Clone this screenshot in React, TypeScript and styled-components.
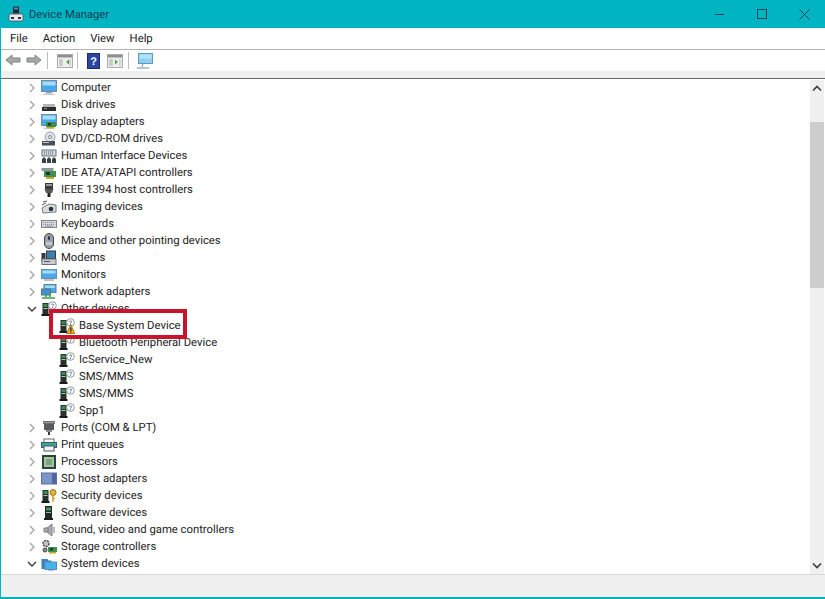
import React from "react";
import styled, { createGlobalStyle } from "styled-components";

const Global = createGlobalStyle`
  html, body { margin: 0; padding: 0; width: 825px; height: 599px; overflow: hidden; background: #00b4c1; }
  #root { width: 825px; height: 599px; }
  * { box-sizing: border-box; }
`;

const Window = styled.div`
  width: 825px; height: 599px; display: flex; flex-direction: column; overflow: hidden;
  background: #00b4c1; padding: 0 0 2px 1px;
  font-family: "Roboto", "Noto Sans", sans-serif; font-size: 11.3px; color: #1c1c1c;
  text-rendering: geometricPrecision;
`;
const TitleBar = styled.header`
  height: 28px; flex: none; display: flex; align-items: center; padding-left: 8px; gap: 5px; margin-left: -1px;
`;
const TitleText = styled.span`flex: 1; color: #0f3f55; font-size: 11.2px;`;
const WinControls = styled.div`display: flex; flex: none; margin-right: -1px;`;
const WinButton = styled.div`
  width: 42.5px; height: 28px; display: flex; align-items: center; justify-content: center; color: #0d4058;
`;
const Menu = styled.nav`
  height: 22px; flex: none; display: flex; align-items: center; background: #fff; padding-left: 1px; border-bottom: 1px solid #b4b4b4;
`;
const MenuItem = styled.span`padding: 0 7.5px; line-height: 21px; &:first-child { padding-left: 8px; }`;
const Toolbar = styled.div`
  height: 21px; flex: none; display: flex; align-items: center; background: #fff; padding-left: 4px;
`;
const ToolIcon = styled.span<{ $w: number; $after?: number }>`
  width: ${p => p.$w}px; height: 16px; margin-right: ${p => p.$after ?? 0}px; display: block; flex: none;
  svg { display: block; }
`;
const ToolSep = styled.span<{ $after: number }>`
  width: 1px; height: 17px; background: #bcbcbc; margin-right: ${p => p.$after}px; flex: none;
`;
const Band = styled.div`height: 8px; flex: none; background: #f0f0f0; border-bottom: 1px solid #6a6a6a;`;
const Main = styled.div`flex: 1; min-height: 0; display: flex; background: #fff;`;
const Tree = styled.ul`
  flex: 1; margin: 0; padding: 0; list-style: none; overflow: hidden; min-width: 0;
`;
const Row = styled.li<{ $child?: boolean }>`
  position: relative; height: 17px; display: flex; align-items: center;
  padding-left: ${p => (p.$child ? 58 : 21)}px;
  svg { flex: none; }
`;
const Chevron = styled.span`width: 19px; height: 17px; display: flex; align-items: center; justify-content: center; flex: none;`;
const Label = styled.span`margin-left: 4px; white-space: nowrap; line-height: 17px; margin-top: -1px;`;
const Highlight = styled.div`
  position: absolute; left: 48px; top: -8px; width: 138px; height: 30px; border: 4px solid #c9142e; z-index: 2; pointer-events: none;
`;
const Scrollbar = styled.div`
  width: 15px; flex: none; background: #f0f0f0; display: flex; flex-direction: column; margin-top: 1px;
  border-right: 1px solid #fff;
`;
const Arrow = styled.div`height: 17px; flex: none; display: flex; align-items: center; justify-content: center;`;
const TrackGap = styled.div<{ $h?: number }>`${p => (p.$h ? `height: ${p.$h}px; flex: none;` : "flex: 1;")}`;
const Thumb = styled.div`height: 166px; flex: none; background: #cdcdcd;`;
const StatusBar = styled.footer`height: 23px; flex: none; background: #f0f0f0; border-top: 1px solid #d7d7d7;`;

const S = ({ children }: { children: React.ReactNode }) => (
  <svg width="16" height="16" viewBox="0 0 16 16">{children}</svg>
);

const Tower = ({ x = 0 }: { x?: number }) => (
  <g transform={`translate(${x} 0)`}>
    <rect x="1.5" y="2" width="6" height="11" fill="#26322b" />
    <rect x="2.5" y="3" width="4" height="3" fill="#3a8a58" />
    <rect x="2.5" y="7" width="4" height="1" fill="#a8c8b0" />
    <rect x="0.5" y="13" width="8" height="2" fill="#1a1a1a" />
  </g>
);
const QBubble = () => (
  <g>
    <circle cx="11.5" cy="4.5" r="3.8" fill="#fff" stroke="#8c9aa6" />
    <path d="M10.3 3.6c.3-1 2.4-1 2.4.2 0 .8-1.2.9-1.2 1.8" fill="none" stroke="#55636e" strokeWidth=".9" />
    <rect x="11.1" y="6.2" width=".9" height=".9" fill="#55636e" />
  </g>
);
const Mon = ({ c = "#4aa8e8" }: { c?: string }) => (
  <g>
    <rect x="0.5" y="0.5" width="15" height="11" fill={c} stroke="#6f8da6" />
    <rect x="1.5" y="1.5" width="13" height="4" fill="#a6dcfa" />
    <rect x="5" y="12" width="6" height="1.5" fill="#9aa6ae" />
    <rect x="2.5" y="13.5" width="11" height="1.5" fill="#c3ccd3" />
  </g>
);
const Card = () => (
  <g>
    <rect x="5" y="8" width="10" height="5" fill="#3d8f4a" />
    <rect x="6" y="13" width="7" height="1.5" fill="#c9a82e" />
    <rect x="7" y="9" width="3" height="2.5" fill="#1d3d26" />
  </g>
);

const icons: Record<string, React.ReactNode> = {
  computer: <S><Mon /></S>,
  disk: <S><rect x="2" y="7" width="12" height="3" fill="#b6b6b6" /><rect x="1" y="10" width="14" height="4" fill="#2d2d2d" /><rect x="3" y="11" width="3" height="1" fill="#8a8a8a" /></S>,
  display: <S><Mon /><Card /></S>,
  dvd: <S><circle cx="9" cy="6" r="5" fill="#dde2e6" stroke="#9aa3aa" /><circle cx="9" cy="6" r="1.5" fill="#fff" stroke="#7c868e" /><rect x="1" y="10" width="13" height="4.5" fill="#4a4f54" /><rect x="2" y="11" width="6" height="1" fill="#c5c9cc" /></S>,
  hid: <S><rect x="1" y="2" width="14" height="6" fill="#cfd6dc" stroke="#6d7780" /><path d="M3 4h10M3 6h10" stroke="#596570" strokeDasharray="1 1" /><path d="M1 15v-4l2-2 2 2v4zM6 15v-4l2-2 2 2v4zM11 15v-4l2-2 2 2v4z" fill="#3a4048" /></S>,
  ide: <S><rect x="0.5" y="3" width="12" height="3" fill="#8f9499" /><rect x="3" y="6" width="12" height="6" fill="#3c9150" /><rect x="5" y="7" width="4" height="3" fill="#183a22" /><rect x="5" y="12" width="8" height="2" fill="#c9a82e" /></S>,
  ieee: <S><rect x="4" y="1" width="8" height="6" fill="#3a3a3a" /><rect x="5" y="2" width="6" height="2" fill="#9a9a9a" /><path d="M3.5 7h9L11 11H5z" fill="#565656" /><rect x="6.5" y="11" width="3" height="4" fill="#222" /></S>,
  imaging: <S><path d="M1 9l7-4 7 1v7l-13 1z" fill="#d8dde0" stroke="#757d84" /><circle cx="10" cy="10" r="2.3" fill="#2a3238" /><path d="M2 3l4-1M1 6l4-2" stroke="#555" /></S>,
  keyboard: <S><rect x="0.5" y="4.5" width="15" height="7" fill="#d3d7da" stroke="#7e858b" /><path d="M2 6.5h12M2 8.5h12" stroke="#8d9499" strokeDasharray="1 1" /><rect x="4" y="9.6" width="8" height="1" fill="#8d9499" /></S>,
  mouse: <S><rect x="3.5" y="0.5" width="9" height="15" rx="4.5" fill="#9aa1a8" stroke="#404850" /><rect x="7" y="3" width="2" height="4" rx="1" fill="#333b44" /><path d="M5 9h6v3H5z" fill="#c3c8cc" /></S>,
  modem: <S><rect x="5" y="0.5" width="10" height="8.5" fill="#2e3a44" /><rect x="6" y="1.5" width="8" height="6.5" fill="#3e7fa8" /><rect x="0.5" y="3" width="4" height="9" fill="#33383d" /><rect x="1" y="9" width="14" height="5.5" fill="#c8ccd0" stroke="#6c7278" /><rect x="3" y="11" width="6" height="1" fill="#555" /></S>,
  monitor: <S><rect x="0.5" y="2.5" width="15" height="9" fill="#4aa8e8" stroke="#6f8da6" /><rect x="1.5" y="3.5" width="13" height="3" fill="#a6dcfa" /><rect x="3" y="12" width="10" height="2" fill="#b9c2c9" /></S>,
  network: <S><rect x="3" y="0.5" width="12" height="8" fill="#4aa8e8" stroke="#5f7f99" /><rect x="4" y="1.5" width="10" height="2.5" fill="#a6dcfa" /><rect x="0.5" y="5" width="9" height="6" fill="#3c94d6" stroke="#56748c" /><path d="M5 11v2M1 14h13M9 9v4" stroke="#3aa04a" strokeWidth="1.6" /></S>,
  other: <S><Tower /><QBubble /></S>,
  warn: <S><Tower /><QBubble /><path d="M7.5 15.5L11.8 6.5l4 9z" fill="#f2b61c" stroke="#8f640a" strokeWidth=".8" /><rect x="11.2" y="9.5" width="1.3" height="3.4" fill="#222" /><rect x="11.2" y="13.4" width="1.3" height="1.2" fill="#222" /></S>,
  ports: <S><rect x="2" y="1" width="12" height="3" fill="#6c6f72" /><path d="M2.5 2.5h11" stroke="#c6c8ca" strokeDasharray="1 1" /><rect x="3" y="4" width="10" height="6" fill="#585b5e" /><rect x="5" y="10" width="6" height="2" fill="#8a8d90" /><rect x="7" y="12" width="2" height="3" fill="#3a3a3a" /></S>,
  print: <S><rect x="3" y="2" width="10" height="4" fill="#fff" stroke="#626a70" /><rect x="0.5" y="5.5" width="15" height="5" fill="#36a5a8" stroke="#44585c" /><rect x="3" y="9" width="10" height="5" fill="#f4f4f4" stroke="#50585c" /></S>,
  proc: <S><rect x="1" y="1" width="14" height="14" fill="#28463a" /><rect x="3" y="3" width="10" height="10" fill="#a8c4a2" /><rect x="5" y="5" width="6" height="6" fill="#7ea47c" /></S>,
  sd: <S><rect x="0.5" y="2" width="15" height="11" fill="#7b95c8" stroke="#5c6f9c" /><rect x="11" y="2" width="4" height="11" fill="#4f68a0" /></S>,
  security: <S><Tower /><circle cx="12" cy="4.5" r="3" fill="#e3b23c" stroke="#9a7413" /><rect x="11.2" y="7" width="1.6" height="7" fill="#d6a02b" /><rect x="12.6" y="10" width="1.4" height="1.2" fill="#d6a02b" /></S>,
  software: <S><rect x="4" y="1" width="7" height="12" fill="#222a26" /><rect x="5" y="2.5" width="5" height="3" fill="#3e9a5e" /><rect x="5" y="7" width="5" height="1" fill="#9ab8a4" /><rect x="3" y="13" width="9" height="2" fill="#1d1d1d" /></S>,
  sound: <S><path d="M3 6h3l5-4v12l-5-4H3z" fill="#a9adb0" stroke="#7a7e82" /><path d="M13 5v6M7 6v4" stroke="#777" /></S>,
  storage: <S><circle cx="5" cy="4.5" r="3" fill="#c2c6ca" stroke="#444" strokeDasharray="2 1" strokeWidth="1.4" /><circle cx="4" cy="11" r="2" fill="#8e9296" stroke="#444" /><rect x="7" y="8" width="9" height="5" fill="#3c9150" /><rect x="8" y="13" width="7" height="1.5" fill="#c9a82e" /><rect x="9" y="9" width="3" height="2.5" fill="#1d3d26" /></S>,
  system: <S><path d="M0.5 3h6l1 1.5h3V13H0.5z" fill="#3d7fc0" /><rect x="4" y="6" width="11.5" height="7.5" fill="#45b4ee" stroke="#5d8fb5" /><rect x="7" y="14" width="6" height="1" fill="#b9c2c9" /></S>,
  hidden: <S><rect x="1" y="2" width="7" height="13" fill="#9b9b9b" /></S>,
};

type Item = { id: string; icon: string; label: string; child?: boolean; open?: boolean; mark?: boolean };
const L = (icon: string, label: string, open?: boolean): Item => ({ id: label, icon, label, open });
const C = (icon: string, label: string, id: string, mark?: boolean): Item => ({ id, icon, label, child: true, mark });

const items: Item[] = [
  L("computer", "Computer"), L("disk", "Disk drives"), L("display", "Display adapters"),
  L("dvd", "DVD/CD-ROM drives"), L("hid", "Human Interface Devices"), L("ide", "IDE ATA/ATAPI controllers"),
  L("ieee", "IEEE 1394 host controllers"), L("imaging", "Imaging devices"), L("keyboard", "Keyboards"),
  L("mouse", "Mice and other pointing devices"), L("modem", "Modems"), L("monitor", "Monitors"),
  L("network", "Network adapters"), L("other", "Other devices", true),
  C("warn", "Base System Device", "c1", true), C("other", "Bluetooth Peripheral Device", "c2"),
  C("other", "IcService_New", "c3"), C("other", "SMS/MMS", "c4"), C("other", "SMS/MMS", "c5"), C("other", "Spp1", "c6"),
  L("ports", "Ports (COM & LPT)"), L("print", "Print queues"), L("proc", "Processors"), L("sd", "SD host adapters"),
  L("security", "Security devices"), L("software", "Software devices"), L("sound", "Sound, video and game controllers"),
  L("storage", "Storage controllers"), L("system", "System devices", true),
  C("hidden", "", "c7"),
];

const ChevronRight = () => (
  <svg width="8" height="10" viewBox="0 0 8 10"><path d="M2 1l4 4-4 4" fill="none" stroke="#a6a6a6" strokeWidth="1.4" /></svg>
);
const ChevronDown = () => (
  <svg width="10" height="8" viewBox="0 0 10 8"><path d="M1 2l4 4 4-4" fill="none" stroke="#3c3c3c" strokeWidth="1.4" /></svg>
);

const ArrowShape = ({ dir }: { dir: 1 | -1 }) => (
  <svg width="16" height="14" viewBox="0 0 16 14">
    <g transform={dir === -1 ? "translate(16 0) scale(-1 1)" : undefined}>
      <path d="M1 7l6-5v3h8v4H7v3z" fill="#a4a8a6" stroke="#7f8482" />
    </g>
  </svg>
);
const PaneIcon = ({ mark }: { mark: "left" | "right" }) => (
  <svg width="16" height="16" viewBox="0 0 16 16">
    <rect x="0.5" y="1.5" width="15" height="13" fill="#eef0ee" stroke="#a9aeab" />
    <rect x="1" y="2" width="14" height="2.5" fill="#8c918e" />
    <path d="M3 6v7M5 6v7" stroke="#a4a9a6" />
    {mark === "left" ? <path d="M12 6.5v5l-3-2.5z" fill="#4aa34a" /> : <path d="M8 6.5v5l3-2.5z" fill="#4aa34a" />}
    <path d="M13 6v7" stroke="#b4b8b5" />
  </svg>
);

export default function App() {
  return (
    <>
      <Global />
      <Window>
        <TitleBar>
          <svg width="16" height="16" viewBox="0 0 16 16">
            <rect x="5" y="0.5" width="6" height="7" fill="#1f2a30" />
            <rect x="6" y="1.5" width="4" height="2" fill="#5a8ab0" />
            <rect x="1" y="8" width="14" height="7" rx="1" fill="#e8ecef" stroke="#59636b" />
            <rect x="3" y="11" width="3" height="2" fill="#27323a" />
            <rect x="10" y="11" width="3" height="2" fill="#27323a" />
          </svg>
          <TitleText>Device Manager</TitleText>
          <WinControls>
            <WinButton>
              <svg width="10" height="10" viewBox="0 0 10 10"><path d="M0 5.5h9" stroke="currentColor" /></svg>
            </WinButton>
            <WinButton>
              <svg width="11" height="11" viewBox="0 0 11 11"><rect x=".5" y=".5" width="9" height="9" fill="none" stroke="currentColor" /></svg>
            </WinButton>
            <WinButton>
              <svg width="11" height="11" viewBox="0 0 11 11"><path d="M.5.5l10 10M10.5.5l-10 10" stroke="currentColor" /></svg>
            </WinButton>
          </WinControls>
        </TitleBar>
        <Menu>
          {["File", "Action", "View", "Help"].map(m => <MenuItem key={m}>{m}</MenuItem>)}
        </Menu>
        <Toolbar>
          <ToolIcon $w={16} $after={5}><ArrowShape dir={1} /></ToolIcon>
          <ToolIcon $w={16} $after={5}><ArrowShape dir={-1} /></ToolIcon>
          <ToolSep $after={9} />
          <ToolIcon $w={16} $after={4}><PaneIcon mark="left" /></ToolIcon>
          <ToolSep $after={9} />
          <ToolIcon $w={13} $after={7}>
            <svg width="13" height="16" viewBox="0 0 13 16">
              <rect x="0.5" y="0.5" width="12" height="15" fill="#2a46a0" stroke="#1b2c6e" />
              <text x="6.5" y="12" fontSize="11" fontWeight="700" fill="#fff" textAnchor="middle" fontFamily="Liberation Sans, sans-serif">?</text>
            </svg>
          </ToolIcon>
          <ToolIcon $w={16} $after={5}><PaneIcon mark="right" /></ToolIcon>
          <ToolSep $after={8} />
          <ToolIcon $w={16}>
            <svg width="16" height="16" viewBox="0 0 16 16">
              <rect x="1.5" y="0.5" width="14" height="10" fill="#8fd0ee" stroke="#5c9cc0" />
              <path d="M6 11l-1 3M0 15h12" stroke="#6d8fa6" />
              <rect x="2.5" y="1.5" width="12" height="4" fill="#b6e2f6" />
            </svg>
          </ToolIcon>
        </Toolbar>
        <Band />
        <Main>
          <Tree>
            {items.map(it => (
              <Row key={it.id} $child={it.child}>
                {!it.child && <Chevron>{it.open ? <ChevronDown /> : <ChevronRight />}</Chevron>}
                {icons[it.icon]}
                <Label>{it.label}</Label>
                {it.mark && <Highlight />}
              </Row>
            ))}
          </Tree>
          <Scrollbar>
            <Arrow>
              <svg width="10" height="7" viewBox="0 0 10 7"><path d="M1 5.5l4-4 4 4" fill="none" stroke="#3e3e3e" strokeWidth="1.7" /></svg>
            </Arrow>
            <TrackGap $h={25} />
            <Thumb />
            <TrackGap />
            <Arrow>
              <svg width="10" height="7" viewBox="0 0 10 7"><path d="M1 1.5l4 4 4-4" fill="none" stroke="#3e3e3e" strokeWidth="1.7" /></svg>
            </Arrow>
          </Scrollbar>
        </Main>
        <StatusBar />
      </Window>
    </>
  );
}
